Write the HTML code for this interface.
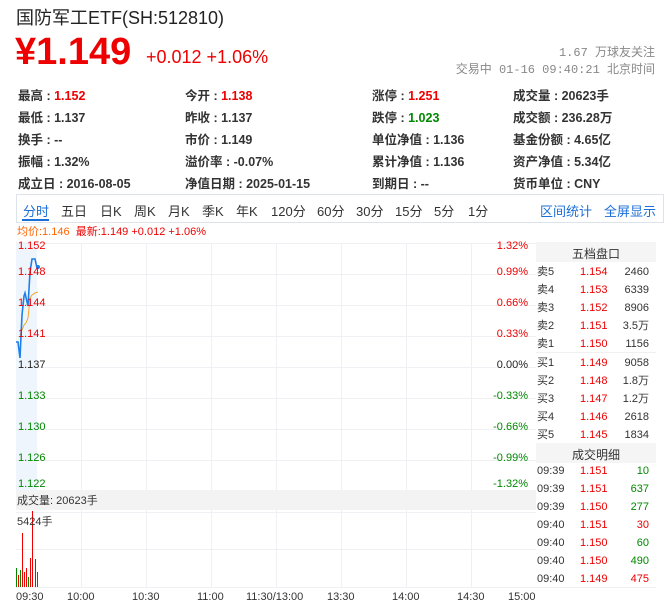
<!DOCTYPE html><html><head><meta charset="utf-8"><style>
*{margin:0;padding:0;box-sizing:border-box}
body{width:670px;height:615px;background:#fff;font-family:"Liberation Sans","Noto Sans CJK SC",sans-serif;color:#333;position:relative;overflow:hidden}
.a{position:absolute;white-space:nowrap}
.info{font-size:12.5px;font-weight:bold;color:#333}
.tab{font-size:13px;top:201px;color:#333}
.yl{font-size:11px;left:18px}
.yr{font-size:11px;right:142px}
.ob{font-size:11px;color:#333}
.xl{font-size:11px;top:591px;color:#333}
.r{color:#e00 !important}.g{color:#080 !important}.b{color:#1a6ed8 !important}
</style></head><body>
<div class="a" style="left:16px;top:4px;font-size:18px;color:#222">国防军工ETF(SH:512810)</div>
<div class="a r" style="left:15px;top:31px;font-size:38px;font-weight:bold">¥1.149</div>
<div class="a r" style="left:146px;top:47px;font-size:18px">+0.012 +1.06%</div>
<div class="a" style="right:15px;top:43px;font-size:12px;color:#888;font-family:'Liberation Mono','Noto Sans CJK SC',monospace">1.67 万球友关注</div>
<div class="a" style="right:15px;top:60px;font-size:12px;color:#888;font-family:'Liberation Mono','Noto Sans CJK SC',monospace">交易中 01-16 09:40:21 北京时间</div>

<div class="a info" style="left:18px;top:85px">最高 : <span class="r">1.152</span></div>
<div class="a info" style="left:185px;top:85px">今开 : <span class="r">1.138</span></div>
<div class="a info" style="left:372px;top:85px">涨停 : <span class="r">1.251</span></div>
<div class="a info" style="left:513px;top:85px">成交量 : 20623手</div>
<div class="a info" style="left:18px;top:107px">最低 : 1.137</div>
<div class="a info" style="left:185px;top:107px">昨收 : 1.137</div>
<div class="a info" style="left:372px;top:107px">跌停 : <span class="g">1.023</span></div>
<div class="a info" style="left:513px;top:107px">成交额 : 236.28万</div>
<div class="a info" style="left:18px;top:129px">换手 : --</div>
<div class="a info" style="left:185px;top:129px">市价 : 1.149</div>
<div class="a info" style="left:372px;top:129px">单位净值 : 1.136</div>
<div class="a info" style="left:513px;top:129px">基金份额 : 4.65亿</div>
<div class="a info" style="left:18px;top:151px">振幅 : 1.32%</div>
<div class="a info" style="left:185px;top:151px">溢价率 : -0.07%</div>
<div class="a info" style="left:372px;top:151px">累计净值 : 1.136</div>
<div class="a info" style="left:513px;top:151px">资产净值 : 5.34亿</div>
<div class="a info" style="left:18px;top:173px">成立日 : 2016-08-05</div>
<div class="a info" style="left:185px;top:173px">净值日期 : 2025-01-15</div>
<div class="a info" style="left:372px;top:173px">到期日 : --</div>
<div class="a info" style="left:513px;top:173px">货币单位 : CNY</div>

<div class="a" style="left:16px;top:194px;width:648px;height:29px;border:1px solid #dde3ea"></div>
<div class="a tab b" style="left:23px">分时</div>
<div class="a" style="left:22px;top:219px;width:27px;height:2px;background:#1a6ed8"></div>
<div class="a tab" style="left:61px">五日</div>
<div class="a tab" style="left:100px">日K</div>
<div class="a tab" style="left:134px">周K</div>
<div class="a tab" style="left:168px">月K</div>
<div class="a tab" style="left:202px">季K</div>
<div class="a tab" style="left:236px">年K</div>
<div class="a tab" style="left:271px">120分</div>
<div class="a tab" style="left:317px">60分</div>
<div class="a tab" style="left:356px">30分</div>
<div class="a tab" style="left:395px">15分</div>
<div class="a tab" style="left:434px">5分</div>
<div class="a tab" style="left:468px">1分</div>
<div class="a tab b" style="left:540px">区间统计</div>
<div class="a tab b" style="left:604px">全屏显示</div>
<div class="a" style="left:17px;top:223px;font-size:11px"><span style="color:#f60">均价:1.146</span>&nbsp; <span class="r">最新:1.149 +0.012 +1.06%</span></div>

<svg class="a" style="left:0;top:0" width="670" height="615">
<rect x="16" y="242" width="21" height="248" fill="#eef5fd"/>
<g stroke="#eef0f3" stroke-width="1">
<line x1="16" y1="243.5" x2="536" y2="243.5"/><line x1="16" y1="274.5" x2="536" y2="274.5"/><line x1="16" y1="305.5" x2="536" y2="305.5"/><line x1="16" y1="336.5" x2="536" y2="336.5"/><line x1="16" y1="367.5" x2="536" y2="367.5"/><line x1="16" y1="398.5" x2="536" y2="398.5"/><line x1="16" y1="429.5" x2="536" y2="429.5"/><line x1="16" y1="460.5" x2="536" y2="460.5"/>
<line x1="16" y1="512.5" x2="536" y2="512.5"/><line x1="16" y1="549.5" x2="536" y2="549.5"/><line x1="16" y1="587.5" x2="536" y2="587.5"/>
<line x1="81.5" y1="243" x2="81.5" y2="490"/><line x1="146.5" y1="243" x2="146.5" y2="490"/><line x1="211.5" y1="243" x2="211.5" y2="490"/><line x1="276.5" y1="243" x2="276.5" y2="490"/><line x1="341.5" y1="243" x2="341.5" y2="490"/><line x1="406.5" y1="243" x2="406.5" y2="490"/><line x1="471.5" y1="243" x2="471.5" y2="490"/>
<line x1="81.5" y1="510" x2="81.5" y2="587"/><line x1="146.5" y1="510" x2="146.5" y2="587"/><line x1="211.5" y1="510" x2="211.5" y2="587"/><line x1="276.5" y1="510" x2="276.5" y2="587"/><line x1="341.5" y1="510" x2="341.5" y2="587"/><line x1="406.5" y1="510" x2="406.5" y2="587"/><line x1="471.5" y1="510" x2="471.5" y2="587"/>
</g>
<rect x="16" y="490" width="520" height="20" fill="#f3f3f3"/>
<polyline fill="none" stroke="#f5a623" stroke-width="1" points="20,335 22,330 24,325 26,323 28,318 30,298 32,295 35,293 38,292"/>
<polyline fill="none" stroke="#1e7fe8" stroke-width="1.6" points="16,342 18,342 20,358 22,315 24,296 25,293 27,302 28,306 30,272 32,259 35,259 37,268 39,267"/>
<circle cx="38" cy="267" r="2" fill="#1e7fe8"/>
<g stroke-width="1">
<line x1="16.5" y1="587" x2="16.5" y2="568" stroke="#080"/><line x1="18.5" y1="587" x2="18.5" y2="575" stroke="#e00"/><line x1="20.5" y1="587" x2="20.5" y2="570" stroke="#080"/><line x1="22.5" y1="587" x2="22.5" y2="533" stroke="#e00"/><line x1="24.5" y1="587" x2="24.5" y2="572" stroke="#e00"/><line x1="26.5" y1="587" x2="26.5" y2="568" stroke="#e00"/><line x1="28.5" y1="587" x2="28.5" y2="577" stroke="#080"/><line x1="30.5" y1="587" x2="30.5" y2="558" stroke="#e00"/><line x1="32.5" y1="587" x2="32.5" y2="511" stroke="#e00"/><line x1="35.5" y1="587" x2="35.5" y2="559" stroke="#e00"/><line x1="37.5" y1="587" x2="37.5" y2="572" stroke="#080"/>
</g>
<rect x="536" y="242" width="120" height="20" fill="#f5f5f5"/>
<rect x="536" y="443" width="120" height="20" fill="#f5f5f5"/>
<line x1="536" y1="352.5" x2="656" y2="352.5" stroke="#f0f0f0"/>
<line x1="536" y1="587.5" x2="656" y2="587.5" stroke="#f0f0f0"/>
</svg>

<div class="a yl r" style="top:240px">1.152</div>
<div class="a yl r" style="top:266px">1.148</div>
<div class="a yl r" style="top:297px">1.144</div>
<div class="a yl r" style="top:328px">1.141</div>
<div class="a yl" style="top:359px;color:#222">1.137</div>
<div class="a yl g" style="top:390px">1.133</div>
<div class="a yl g" style="top:421px">1.130</div>
<div class="a yl g" style="top:452px">1.126</div>
<div class="a yl g" style="top:478px">1.122</div>
<div class="a yr r" style="top:240px">1.32%</div>
<div class="a yr r" style="top:266px">0.99%</div>
<div class="a yr r" style="top:297px">0.66%</div>
<div class="a yr r" style="top:328px">0.33%</div>
<div class="a yr" style="top:359px;color:#222">0.00%</div>
<div class="a yr g" style="top:390px">-0.33%</div>
<div class="a yr g" style="top:421px">-0.66%</div>
<div class="a yr g" style="top:452px">-0.99%</div>
<div class="a yr g" style="top:478px">-1.32%</div>
<div class="a" style="left:17px;top:492px;font-size:11px;color:#333">成交量: 20623手</div>
<div class="a" style="left:17px;top:513px;font-size:11px;color:#333">5424手</div>
<div class="a xl" style="left:16px">09:30</div>
<div class="a xl" style="left:67px">10:00</div>
<div class="a xl" style="left:132px">10:30</div>
<div class="a xl" style="left:197px">11:00</div>
<div class="a xl" style="left:246px">11:30/13:00</div>
<div class="a xl" style="left:327px">13:30</div>
<div class="a xl" style="left:392px">14:00</div>
<div class="a xl" style="left:457px">14:30</div>
<div class="a xl" style="left:508px">15:00</div>

<div class="a ob" style="left:536px;width:120px;text-align:center;top:245px;font-size:12px">五档盘口</div>
<div class="a ob" style="left:536px;width:120px;text-align:center;top:446px;font-size:12px">成交明细</div>
<div class="a ob" style="left:537px;top:263px;line-height:18px">卖5<br>卖4<br>卖3<br>卖2<br>卖1</div>
<div class="a ob r" style="left:580px;top:263px;line-height:18px">1.154<br>1.153<br>1.152<br>1.151<br>1.150</div>
<div class="a ob" style="right:21px;top:263px;line-height:18px;text-align:right">2460<br>6339<br>8906<br>3.5万<br>1156</div>
<div class="a ob" style="left:537px;top:354px;line-height:18px">买1<br>买2<br>买3<br>买4<br>买5</div>
<div class="a ob r" style="left:580px;top:354px;line-height:18px">1.149<br>1.148<br>1.147<br>1.146<br>1.145</div>
<div class="a ob" style="right:21px;top:354px;line-height:18px;text-align:right">9058<br>1.8万<br>1.2万<br>2618<br>1834</div>
<div class="a ob" style="left:537px;top:462px;line-height:18px">09:39<br>09:39<br>09:39<br>09:40<br>09:40<br>09:40<br>09:40</div>
<div class="a ob r" style="left:580px;top:462px;line-height:18px">1.151<br>1.151<br>1.150<br>1.151<br>1.150<br>1.150<br>1.149</div>
<div class="a ob" style="right:21px;top:462px;line-height:18px;text-align:right"><span class="g">10</span><br><span class="g">637</span><br><span class="g">277</span><br><span class="r">30</span><br><span class="g">60</span><br><span class="g">490</span><br><span class="r">475</span></div>
</body></html>
